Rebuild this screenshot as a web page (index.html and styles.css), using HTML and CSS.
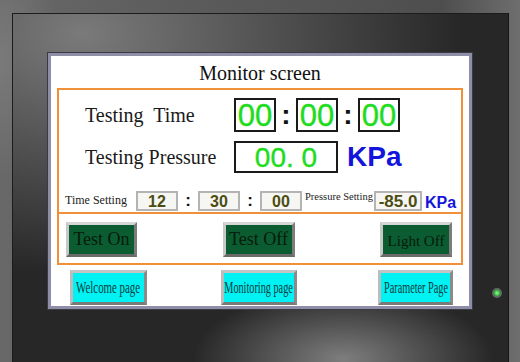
FILE: index.html
```html
<!DOCTYPE html>
<html lang="en">
<head>
    <meta charset="UTF-8">
    <meta name="viewport" content="width=device-width, initial-scale=1.0">
    <title>Monitor screen</title>
    <link rel="stylesheet" href="styles.css">
</head>
<body>
    <div class="bezel">
        <div class="panel">
            <div class="screen">
                <div class="title">Monitor screen</div>

                <div class="box">
                    <div class="readings">
                        <div class="row">
                            <span class="label">Testing&nbsp; Time</span>
                            <span class="digit">00</span>
                            <span class="colon">:</span>
                            <span class="digit">00</span>
                            <span class="colon">:</span>
                            <span class="digit">00</span>
                        </div>
                        <div class="row row-pressure">
                            <span class="label">Testing Pressure</span>
                            <span class="digit digit-wide">00. 0</span>
                            <span class="unit">KPa</span>
                        </div>
                        <div class="settings">
                            <span class="set-label set-time">Time Setting</span>
                            <span class="set-value">12</span>
                            <span class="set-colon">:</span>
                            <span class="set-value">30</span>
                            <span class="set-colon">:</span>
                            <span class="set-value">00</span>
                            <span class="set-label set-pressure">Pressure Setting</span>
                            <span class="set-value set-wide">-85.0</span>
                            <span class="unit unit-small">KPa</span>
                        </div>
                    </div>
                    <div class="actions">
                        <button type="button" class="btn-test">Test On</button>
                        <button type="button" class="btn-test">Test Off</button>
                        <button type="button" class="btn-test btn-light">Light Off</button>
                    </div>
                </div>

                <div class="nav">
                    <button type="button" class="btn-nav nav-welcome"><span>Welcome page</span></button>
                    <button type="button" class="btn-nav nav-monitor"><span>Monitoring page</span></button>
                    <button type="button" class="btn-nav nav-param"><span>Parameter Page</span></button>
                </div>
            </div>
            <span class="led"></span>
        </div>
    </div>
</body>
</html>
```

FILE: styles.css
```css
html, body { margin: 0; padding: 0; }
body { width: 520px; height: 362px; overflow: hidden; font-family: "Liberation Serif", "Times New Roman", "DejaVu Serif", serif; }

.bezel { box-sizing: border-box; height: 362px; padding: 13px 11px 0 12px;
    background: radial-gradient(ellipse 60px 120px at 0 60px, #7a7a7a, transparent),
                linear-gradient(90deg, #686868 0%, #5a5a5a 40%, #4e4e4e 85%, #6e6e6e 100%); }
.panel { position: relative; box-sizing: border-box; height: 100%; padding: 39px 0 0 35px;
    border-left: 1px solid #1c1c1c; border-top: 1px solid #1c1c1c; border-right: 1px solid #141414;
    background: radial-gradient(ellipse 150px 70px at 330px 345px, rgba(135,135,135,0.9), transparent),
                radial-gradient(ellipse 380px 240px at 70px 20px, #7a7a7a, rgba(120,120,120,0) 100%),
                #272727; }

.screen { box-sizing: border-box; width: 424px; height: 256px; background: #fff;
    border: 3px solid #8e8ea8; box-shadow: 0 0 0 1px #3a3a44; overflow: hidden; }
.title { height: 32px; line-height: 34px; text-align: center; font-size: 20px; color: #111; }

.box { box-sizing: border-box; width: 406px; height: 177px; margin-left: 6px; border: 2px solid #f0903a; }
.readings { box-sizing: border-box; height: 124px; padding-top: 8px; border-bottom: 2px solid #f0903a; }

.row { display: flex; align-items: center; height: 34px; padding-left: 26px; }
.row-pressure { height: 32px; margin-top: 9px; }
.label { width: 149px; font-size: 20px; color: #1a1a1a; white-space: nowrap; }
.digit { box-sizing: border-box; width: 42px; height: 34px; border: 2px solid #1a1a1a;
    font-family: "Liberation Sans", sans-serif; font-size: 31px; line-height: 31px; text-align: center; color: #1fdc1f;
    -webkit-text-stroke: 0.4px #1fdc1f; }
.digit-wide { width: 104px; height: 32px; font-size: 28px; line-height: 29px; }
.colon { width: 20px; text-align: center; font-family: "Liberation Sans", sans-serif; font-weight: bold; font-size: 28px; line-height: 28px; color: #111; }
.unit { margin-left: 9px; font-family: "Liberation Sans", sans-serif; font-weight: bold; font-size: 28px; color: #1414dc; }

.settings { display: flex; align-items: center; height: 21px; margin-top: 17px; padding-left: 6px; }
.set-label { font-size: 12px; color: #222; white-space: nowrap; }
.set-time { width: 71px; }
.set-pressure { align-self: flex-start; margin-left: 3px; width: 69px; font-size: 10.5px; line-height: 14px; }
.set-value { box-sizing: border-box; width: 42px; height: 20px; border: 2px solid #b4b4b4; background: #f6f6f2;
    font-family: "Liberation Sans", sans-serif; font-weight: bold; font-size: 16px; line-height: 17px; text-align: center; color: #4c4c14; }
.set-wide { width: 48px; font-size: 17px; }
.set-colon { width: 20px; text-align: center; font-family: "Liberation Sans", sans-serif; font-weight: bold; font-size: 17px; line-height: 17px; color: #111; }
.unit-small { margin-left: 3px; margin-top: 4px; font-size: 16px; }

.actions { display: flex; justify-content: space-between; padding: 8px 9px 0 7px; }
button { margin: 0; padding: 0; cursor: pointer; }
.btn-test { box-sizing: border-box; width: 72px; height: 35px; background: #0b5c30;
    border: 3px solid; border-color: #d6d6d6 #7c7c7c #6a6a6a #c8c8c8;
    font-family: "Liberation Serif", "Times New Roman", serif; font-size: 18px; color: #061a0c; }
.btn-test:first-child { width: 71px; }
.btn-light { font-size: 15px; padding-top: 3px; }

.nav { display: flex; margin-top: 5px; padding-left: 19px; }
.btn-nav { box-sizing: border-box; height: 35px; background: #00f2f2; overflow: hidden;
    border: 3px solid; border-color: #c4c4c4 #8a8a8a #7a7a7a #bcbcbc;
    font-family: "Liberation Serif", "Times New Roman", serif; font-size: 16px; color: #0c3a40; }
.btn-nav span { display: inline-block; transform: scaleX(0.68); white-space: nowrap; margin: 0 -24px; }
.nav-welcome { width: 77px; }
.nav-monitor { width: 76px; margin-left: 74px; }
.nav-monitor span { margin-top: -4px; transform: scaleX(0.64); }
.nav-param { width: 75px; margin-left: 81px; }
.nav-param span { transform: scaleX(0.64); }

.led { position: absolute; left: 479px; top: 274px; width: 10px; height: 10px; border-radius: 50%;
    box-sizing: border-box; border: 2px solid #5e6e60;
    background: radial-gradient(circle, #8cff8c 0, #3cc040 60%, #2a6a30 100%); }
```
